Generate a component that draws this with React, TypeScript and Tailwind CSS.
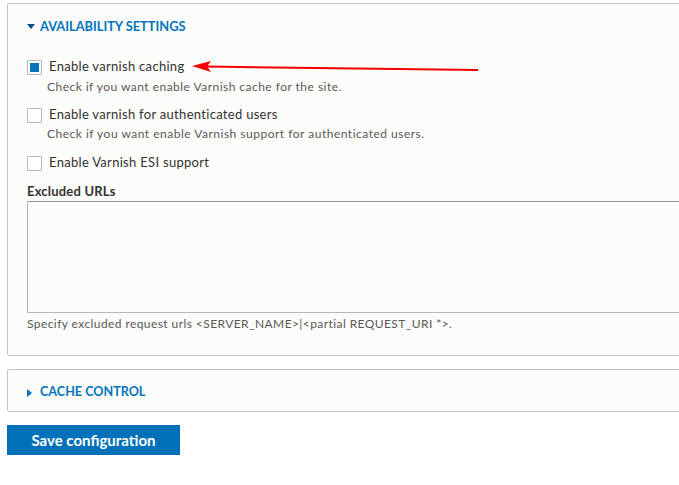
import React from "react";

function Checkbox({ checked }: { checked?: boolean }) {
  return (
    <span className="w-[15px] h-[15px] border border-[#b8b8b8] bg-white flex items-center justify-center shrink-0 rounded-[1px]">
      {checked && <span className="w-[9px] h-[9px] bg-[#0074bd]" />}
    </span>
  );
}

function Triangle({ down }: { down?: boolean }) {
  return down ? (
    <svg width="8" height="7" viewBox="0 0 8 7" className="shrink-0">
      <polygon points="0,1 8,1 4,6" fill="#004f80" />
    </svg>
  ) : (
    <svg width="6" height="8" viewBox="0 0 6 8" className="shrink-0">
      <polygon points="0,0 5,4 0,8" fill="#0074bd" />
    </svg>
  );
}

export default function App() {
  return (
    <div className="relative w-[679px] h-[485px] overflow-hidden bg-white font-['Lato',sans-serif] text-[13px] text-[#333]">
      <div className="pl-[7px] pt-[3px] flex flex-col">
        <div className="w-[720px] border border-[#c4c4c4] rounded-[2px] bg-[#fcfcfa] pl-[19px] pt-[12px] pb-[22px]">
          <div className="flex items-center gap-[5px] h-[20px] leading-[20px]">
            <Triangle down />
            <span className="text-[#0074bd] font-bold text-[12.8px] uppercase">Availability settings</span>
          </div>
          <div className="mt-[22px] flex items-center gap-[7px] h-[18px] tracking-[0.3px]">
            <Checkbox checked />
            <span>Enable varnish caching</span>
          </div>
          <div className="mt-[2px] pl-[20px] h-[18px] leading-[18px] text-[12px] tracking-[0.47px] text-[#595959]">
            Check if you want enable Varnish cache for the site.
          </div>
          <div className="mt-[10px] flex items-center gap-[7px] h-[18px] tracking-[0.3px]">
            <Checkbox />
            <span>Enable varnish for authenticated users</span>
          </div>
          <div className="mt-[1px] pl-[20px] h-[18px] leading-[18px] text-[12px] tracking-[0.5px] text-[#595959]">
            Check if you want enable Varnish support for authenticated users.
          </div>
          <div className="mt-[11px] flex items-center gap-[7px] h-[18px] tracking-[0.3px]">
            <Checkbox />
            <span>Enable Varnish ESI support</span>
          </div>
          <div className="mt-[10px] h-[18px] leading-[18px] font-bold tracking-[0.2px]">Excluded URLs</div>
          <div className="mt-[1px] h-[112px] w-[700px] border border-[#b8b8b8] border-t-[#999] bg-[#fcfcfa]" />
          <div className="mt-[2px] h-[18px] leading-[18px] text-[12px] tracking-[0.42px] text-[#595959]">
            Specify excluded request urls &lt;SERVER_NAME&gt;|&lt;partial REQUEST_URI *&gt;.
          </div>
        </div>
        <div className="mt-[13px] w-[720px] h-[43px] border border-[#c4c4c4] rounded-[2px] bg-[#fcfcfa] pl-[19px] pt-[4px] flex items-center gap-[7px]">
          <Triangle />
          <span className="text-[#0074bd] font-bold text-[12.6px] uppercase">Cache control</span>
        </div>
        <div className="mt-[13px]">
          <button className="w-[173px] h-[30px] bg-[#0071b8] text-white font-bold text-[15px] flex items-center justify-center">
            Save configuration
          </button>
        </div>
      </div>
      <svg className="absolute left-0 top-0 pointer-events-none" width="679" height="485">
        <line x1="205" y1="66.5" x2="478" y2="70" stroke="#f20000" strokeWidth="2" />
        <polygon points="192,66 211,61 207,66.5 211,72" fill="#f20000" />
      </svg>
    </div>
  );
}
